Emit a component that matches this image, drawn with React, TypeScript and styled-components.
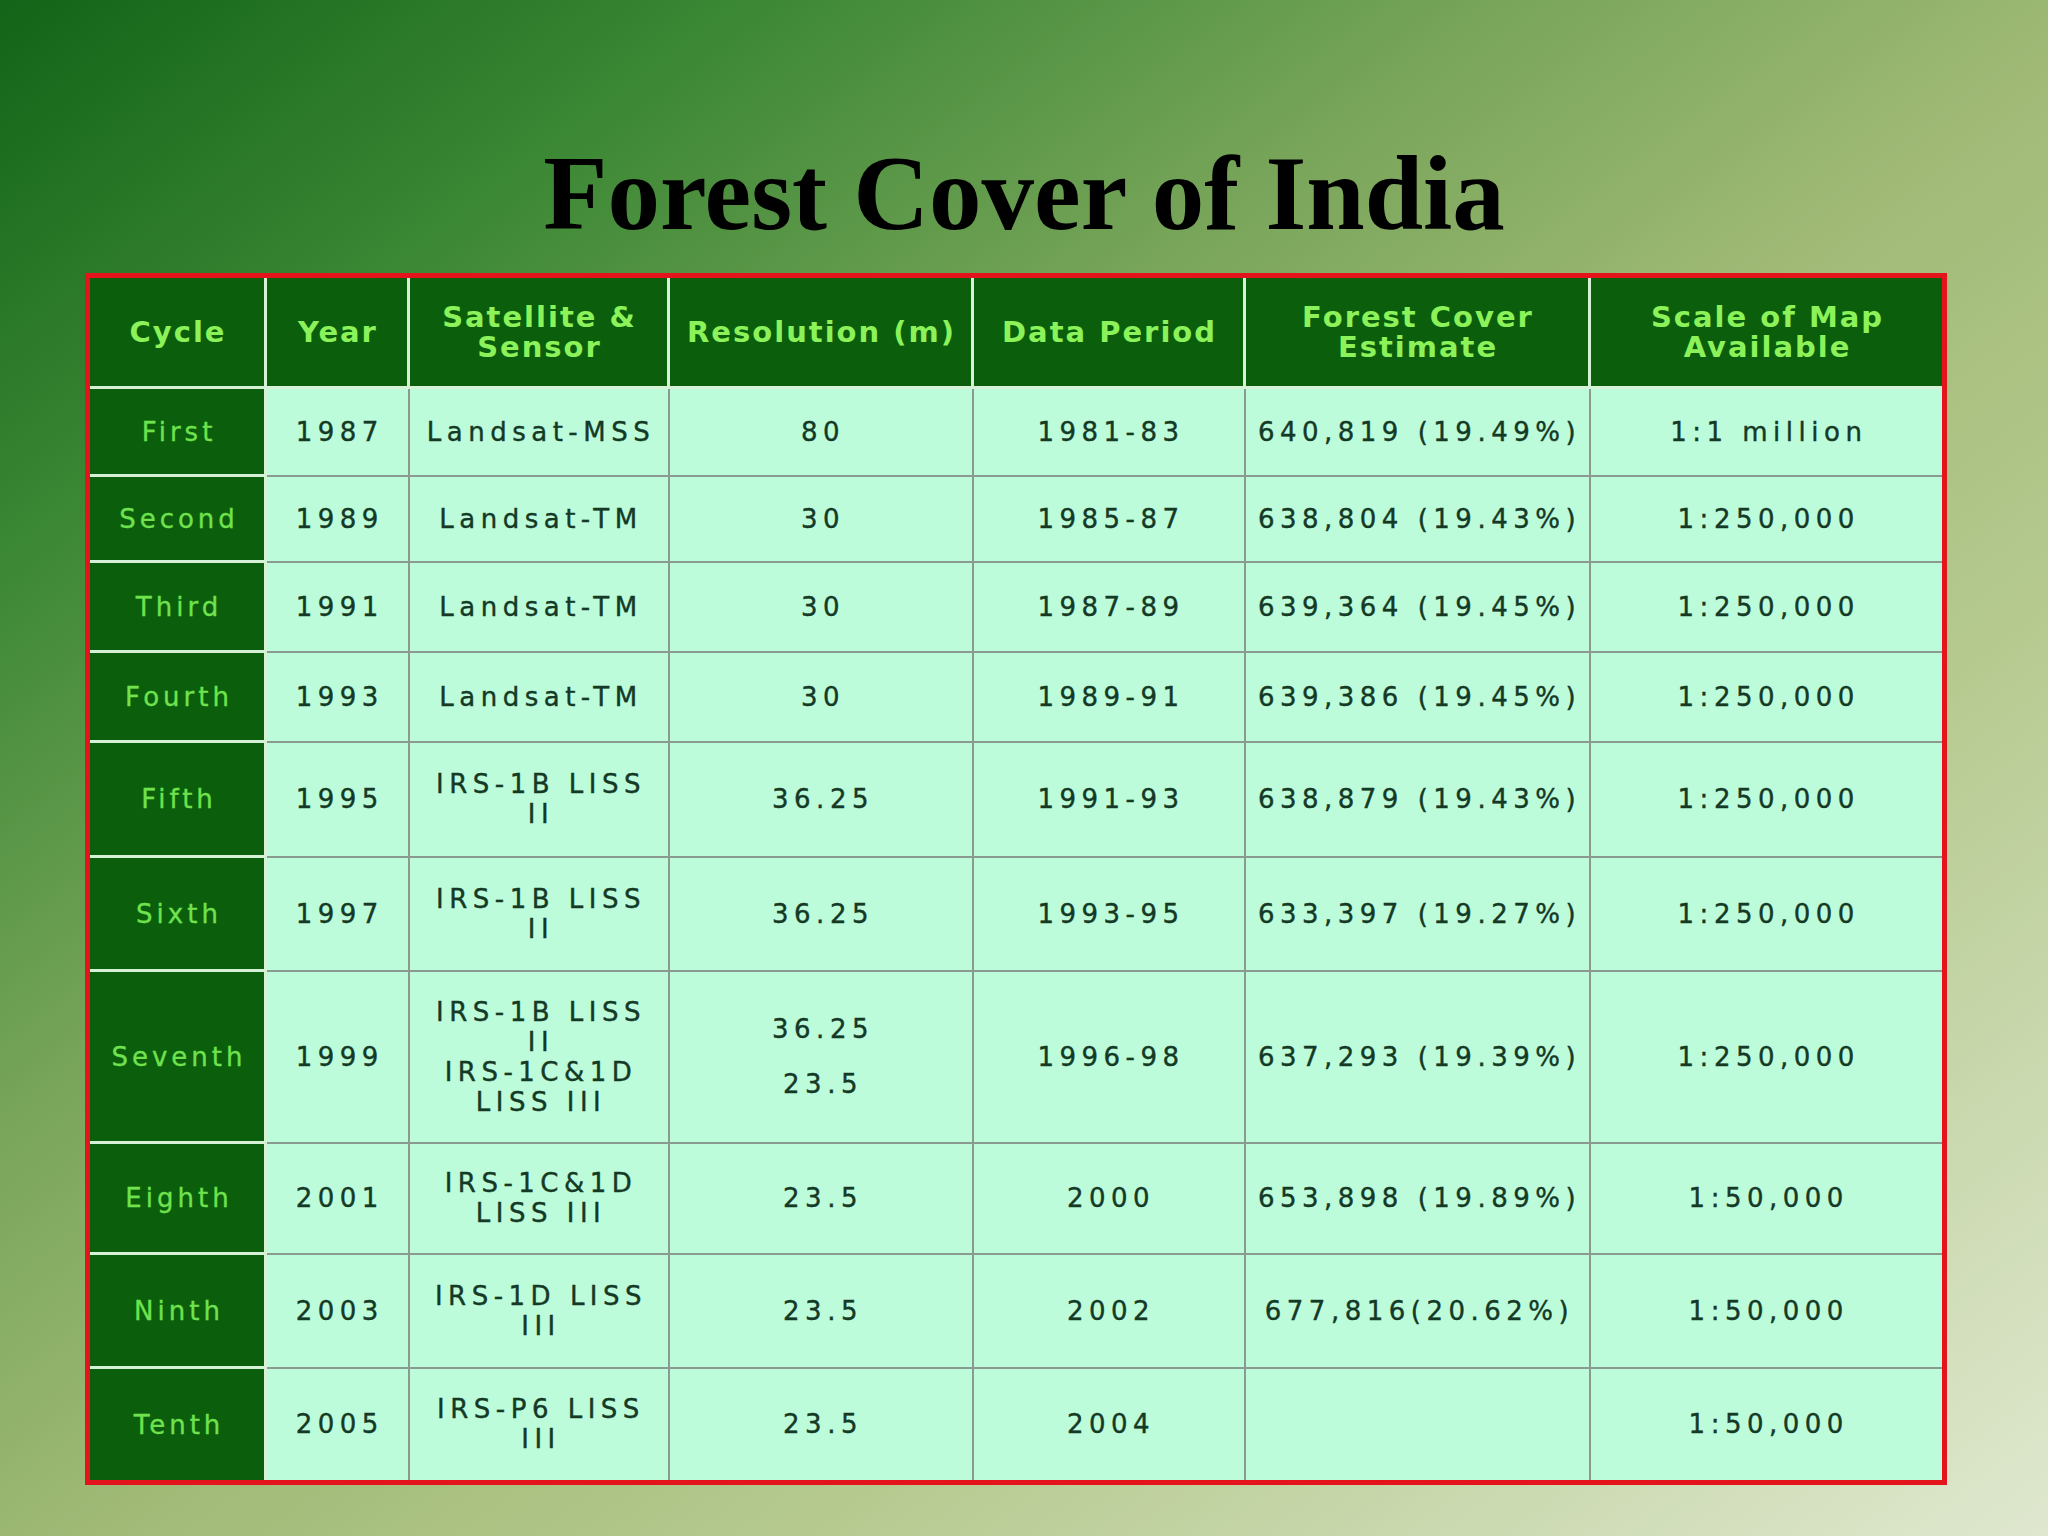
import React from "react";
import styled, { createGlobalStyle } from "styled-components";

const Global = createGlobalStyle`
  html, body { margin: 0; padding: 0; }
  body { width: 2048px; height: 1536px; overflow: hidden; }
`;

const Slide = styled.div`
  width: 2048px;
  height: 1536px;
  box-sizing: border-box;
  padding-top: 134px;
  display: flex;
  flex-direction: column;
  background: linear-gradient(
    to bottom right,
    #136418 0%,
    #3a8734 18%,
    #76a458 36%,
    #a0ba76 52%,
    #b6ca90 70%,
    #dfe8cf 100%
  );
`;

const Title = styled.h1`
  margin: 0;
  height: 139px;
  text-align: center;
  font-family: "Liberation Serif", "Times New Roman", serif;
  font-weight: 700;
  font-size: 105px;
  line-height: 120px;
  color: #000;
`;

const TableWrap = styled.div`
  padding-left: 85px;
`;

const Table = styled.table`
  width: 1857px;
  table-layout: fixed;
  border-collapse: collapse;
  border: 5px solid #e3141c;
  font-family: "DejaVu Sans", Verdana, sans-serif;
`;

const Row = styled.tr<{ $h: number }>`
  height: ${(p) => p.$h}px;
`;

const Head = styled.th`
  background: #0b5f0c;
  color: #8cf25a;
  font-weight: 700;
  font-size: 29px;
  letter-spacing: 2px;
  line-height: 30px;
  text-align: center;
  vertical-align: middle;
  padding: 0 0 0 2px;
  border: 3px solid #d6f2d6;
  white-space: nowrap;
`;

const CycleCell = styled.td`
  background: #0b5f0c;
  color: #70e24e;
  font-size: 26px;
  letter-spacing: 4px;
  line-height: 30px;
  text-align: center;
  vertical-align: middle;
  padding: 0 0 0 4px;
  border: 3px solid #d6f2d6;
  white-space: nowrap;
  -webkit-text-stroke: 0.3px #70e24e;
`;

const DataCell = styled.td`
  background: #bdfcdb;
  color: #143a26;
  font-size: 26px;
  letter-spacing: 5.5px;
  line-height: 30px;
  text-align: center;
  vertical-align: middle;
  padding: 0 0 0 5px;
  border: 2px solid #8a9a90;
  white-space: nowrap;
  -webkit-text-stroke: 0.4px #143a26;
`;

const Stack = styled.div<{ $gap: number }>`
  display: flex;
  flex-direction: column;
  align-items: center;
  gap: ${(p) => p.$gap}px;
`;

type RowData = {
  cycle: string;
  year: string;
  sat: string[];
  res: string[];
  period: string;
  cover: string;
  scale: string;
  h: number;
};

const rows: RowData[] = [
  { cycle: "First", year: "1987", sat: ["Landsat-MSS"], res: ["80"], period: "1981-83", cover: "640,819 (19.49%)", scale: "1:1 million", h: 88 },
  { cycle: "Second", year: "1989", sat: ["Landsat-TM"], res: ["30"], period: "1985-87", cover: "638,804 (19.43%)", scale: "1:250,000", h: 86 },
  { cycle: "Third", year: "1991", sat: ["Landsat-TM"], res: ["30"], period: "1987-89", cover: "639,364 (19.45%)", scale: "1:250,000", h: 90 },
  { cycle: "Fourth", year: "1993", sat: ["Landsat-TM"], res: ["30"], period: "1989-91", cover: "639,386 (19.45%)", scale: "1:250,000", h: 90 },
  { cycle: "Fifth", year: "1995", sat: ["IRS-1B LISS", "II"], res: ["36.25"], period: "1991-93", cover: "638,879 (19.43%)", scale: "1:250,000", h: 115 },
  { cycle: "Sixth", year: "1997", sat: ["IRS-1B LISS", "II"], res: ["36.25"], period: "1993-95", cover: "633,397 (19.27%)", scale: "1:250,000", h: 114 },
  { cycle: "Seventh", year: "1999", sat: ["IRS-1B LISS", "II", "IRS-1C&1D", "LISS III"], res: ["36.25", "23.5"], period: "1996-98", cover: "637,293 (19.39%)", scale: "1:250,000", h: 172 },
  { cycle: "Eighth", year: "2001", sat: ["IRS-1C&1D", "LISS III"], res: ["23.5"], period: "2000", cover: "653,898 (19.89%)", scale: "1:50,000", h: 111 },
  { cycle: "Ninth", year: "2003", sat: ["IRS-1D LISS", "III"], res: ["23.5"], period: "2002", cover: "677,816(20.62%)", scale: "1:50,000", h: 114 },
  { cycle: "Tenth", year: "2005", sat: ["IRS-P6 LISS", "III"], res: ["23.5"], period: "2004", cover: "", scale: "1:50,000", h: 115 },
];

const headers: string[][] = [
  ["Cycle"],
  ["Year"],
  ["Satellite &", "Sensor"],
  ["Resolution (m)"],
  ["Data Period"],
  ["Forest Cover", "Estimate"],
  ["Scale of Map", "Available"],
];

const widths = [178, 143, 260, 304, 272, 345, 355];

const Lines = ({ lines }: { lines: string[] }) => (
  <>
    {lines.map((l, i) => (
      <React.Fragment key={i}>
        {i > 0 && <br />}
        {l}
      </React.Fragment>
    ))}
  </>
);

export default function App() {
  return (
    <>
      <Global />
      <Slide>
        <Title>Forest Cover of India</Title>
        <TableWrap>
          <Table>
            <colgroup>
              {widths.map((w, i) => (
                <col key={i} style={{ width: w }} />
              ))}
            </colgroup>
            <thead>
              <Row $h={112}>
                {headers.map((h, i) => (
                  <Head key={i}>
                    <Lines lines={h} />
                  </Head>
                ))}
              </Row>
            </thead>
            <tbody>
              {rows.map((r) => (
                <Row key={r.cycle} $h={r.h}>
                  <CycleCell>{r.cycle}</CycleCell>
                  <DataCell>{r.year}</DataCell>
                  <DataCell>
                    <Lines lines={r.sat} />
                  </DataCell>
                  <DataCell>
                    {r.res.length > 1 ? (
                      <Stack $gap={25}>
                        {r.res.map((v) => (
                          <span key={v}>{v}</span>
                        ))}
                      </Stack>
                    ) : (
                      r.res[0]
                    )}
                  </DataCell>
                  <DataCell>{r.period}</DataCell>
                  <DataCell>{r.cover}</DataCell>
                  <DataCell>{r.scale}</DataCell>
                </Row>
              ))}
            </tbody>
          </Table>
        </TableWrap>
      </Slide>
    </>
  );
}
